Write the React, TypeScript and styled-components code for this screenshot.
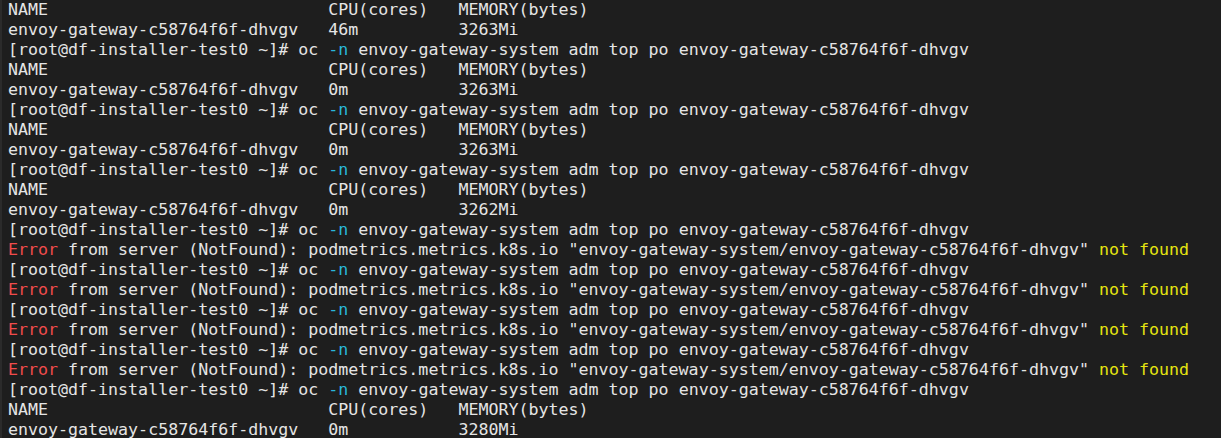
import React from "react";
import styled, { createGlobalStyle } from "styled-components";

const GlobalStyle = createGlobalStyle`
  html, body {
    margin: 0;
    padding: 0;
    background: #1e1e1e;
  }
`;

const Terminal = styled.div`
  width: 1221px;
  height: 438px;
  box-sizing: border-box;
  overflow: hidden;
  background: #1e1e1e;
  border-left: 2px solid #2b2b2b;
  padding: 0 0 0 6px;
  font-family: "DejaVu Sans Mono", "Liberation Mono", monospace;
  font-size: 16.64px;
  color: #e5e5e5;
`;

const Line = styled.div`
  height: 20px;
  line-height: 20px;
  white-space: pre;
`;

type Tone = "red" | "cyan" | "yellow";

const tones: Record<Tone, string> = {
  red: "#f14c4c",
  cyan: "#29b8db",
  yellow: "#e5e510",
};

const Hl = styled.span<{ $tone: Tone }>`
  color: ${(p) => tones[p.$tone]};
`;

const POD = "envoy-gateway-c58764f6f-dhvgv";
const HEADER = "NAME                            CPU(cores)   MEMORY(bytes)";

type Entry =
  | { kind: "header" }
  | { kind: "row"; cpu: string; mem: string }
  | { kind: "prompt" }
  | { kind: "error" };

const row = (cpu: string, mem: string): Entry => ({ kind: "row", cpu, mem });

const lines: Entry[] = [
  { kind: "header" },
  row("46m", "3263Mi"),
  { kind: "prompt" },
  { kind: "header" },
  row("0m", "3263Mi"),
  { kind: "prompt" },
  { kind: "header" },
  row("0m", "3263Mi"),
  { kind: "prompt" },
  { kind: "header" },
  row("0m", "3262Mi"),
  { kind: "prompt" },
  { kind: "error" },
  { kind: "prompt" },
  { kind: "error" },
  { kind: "prompt" },
  { kind: "error" },
  { kind: "prompt" },
  { kind: "error" },
  { kind: "prompt" },
  { kind: "header" },
  row("0m", "3280Mi"),
];

function renderLine(e: Entry) {
  switch (e.kind) {
    case "header":
      return HEADER;
    case "row":
      return `${POD}   ${e.cpu.padEnd(13, " ")}${e.mem}`;
    case "prompt":
      return (
        <>
          {"[root@df-installer-test0 ~]# oc "}
          <Hl $tone="cyan">-n</Hl>
          {` envoy-gateway-system adm top po ${POD}`}
        </>
      );
    case "error":
      return (
        <>
          <Hl $tone="red">Error</Hl>
          {` from server (NotFound): podmetrics.metrics.k8s.io "envoy-gateway-system/${POD}" `}
          <Hl $tone="yellow">not found</Hl>
        </>
      );
  }
}

export default function App() {
  return (
    <>
      <GlobalStyle />
      <Terminal>
        {lines.map((e, i) => (
          <Line key={i}>{renderLine(e)}</Line>
        ))}
      </Terminal>
    </>
  );
}
